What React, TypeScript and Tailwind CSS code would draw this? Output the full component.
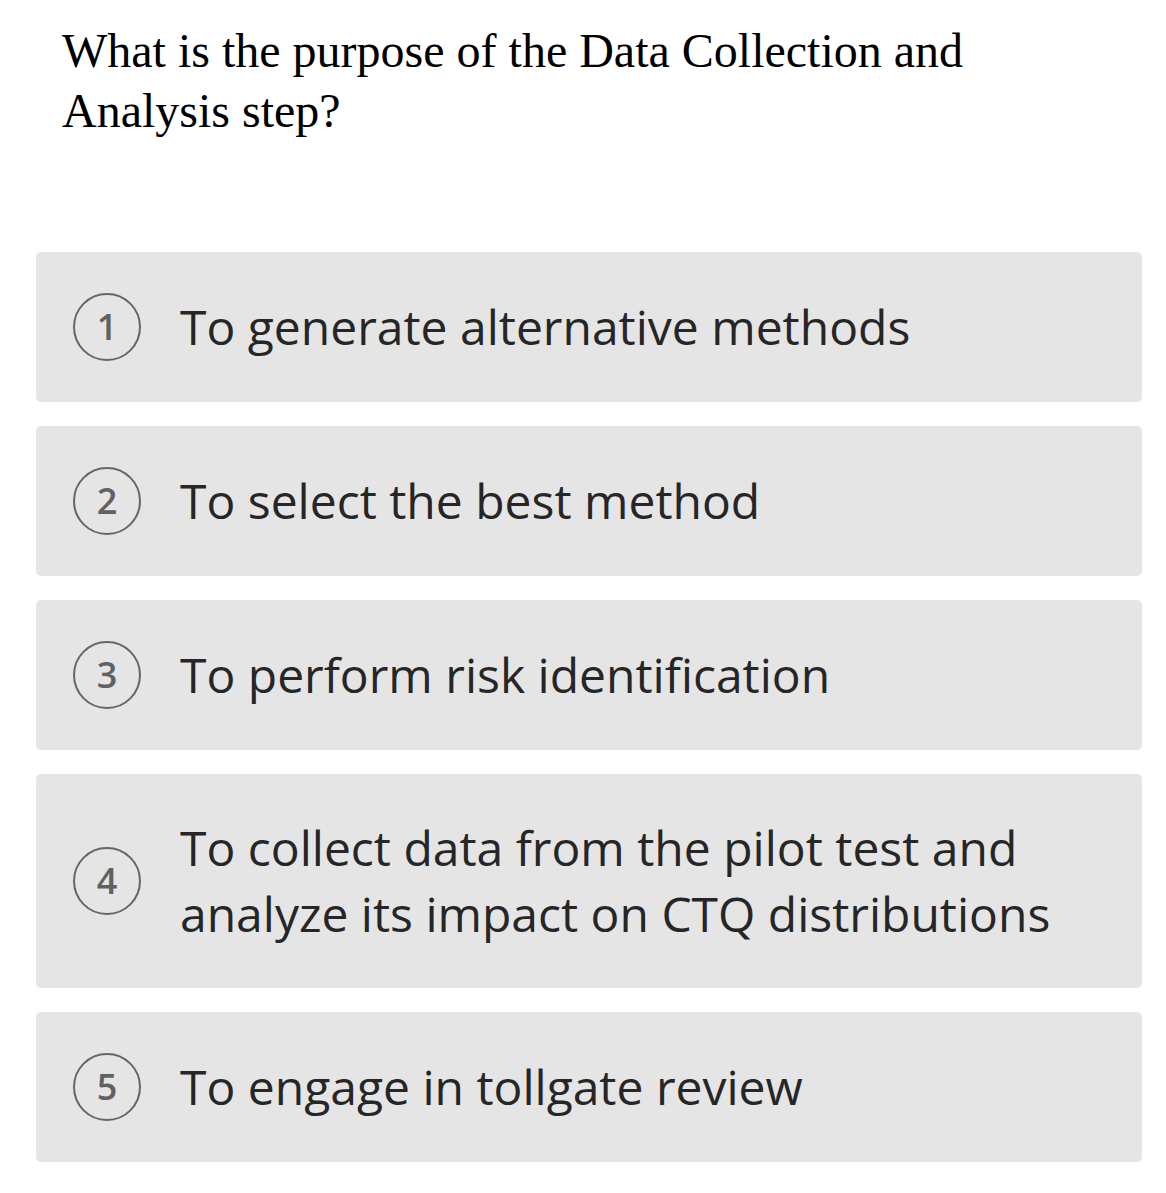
import React from 'react';

const options = [
  'To generate alternative methods',
  'To select the best method',
  'To perform risk identification',
  'To collect data from the pilot test and analyze its impact on CTQ distributions',
  'To engage in tollgate review',
];

export default function App() {
  return (
    <div className="min-h-screen bg-white pl-[36px] pr-[24px] pt-[21px]">
      <h1 className="pl-[26px] pr-[140px] text-[48px] leading-[60px] text-black font-['Liberation_Serif',serif]">
        What is the purpose of the Data Collection and Analysis step?
      </h1>

      <div className="mt-[111px] flex flex-col gap-[24px]">
        {options.map((text, i) => (
          <div
            key={i}
            className="flex items-center rounded-[5px] bg-[#e5e5e5] py-[41px] pl-[37px] pr-[60px]"
          >
            <div className="flex h-[68px] w-[68px] shrink-0 items-center justify-center rounded-full border-[2.5px] border-[#666666] text-[36px] font-semibold text-[#616161] font-['Open_Sans',sans-serif]">
              {i + 1}
            </div>
            <div className="ml-[39px] text-[48px] leading-[66px] text-[#262626] font-['Open_Sans',sans-serif]">
              {text}
            </div>
          </div>
        ))}
      </div>
    </div>
  );
}
